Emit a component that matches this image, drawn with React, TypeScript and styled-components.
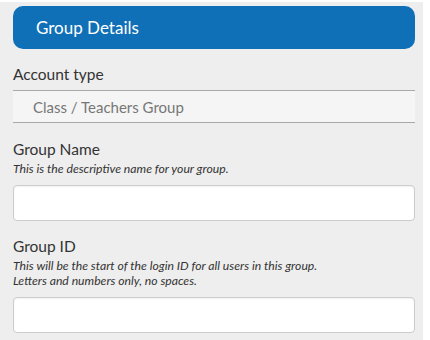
import styled, { createGlobalStyle } from 'styled-components';

const GlobalStyle = createGlobalStyle`
  html, body {
    margin: 0;
    padding: 0;
    background: #ffffff;
  }
  body {
    font-family: Lato, "Open Sans", sans-serif;
  }
`;

const Page = styled.div`
  width: 423px;
  height: 338px;
  margin-top: 2px;
  padding: 4px 8px 0 13px;
  box-sizing: border-box;
  background: #eeeeee;
  display: flex;
  flex-direction: column;
  overflow: hidden;
`;

const Header = styled.div`
  height: 43px;
  display: flex;
  align-items: center;
  padding-left: 23px;
  border-radius: 10px;
  background: #0f70b8;
  color: #ffffff;
  font-size: 17px;
`;

const Field = styled.div<{ $top: number }>`
  display: flex;
  flex-direction: column;
  margin-top: ${p => p.$top}px;
`;

const Label = styled.div`
  font-size: 15.5px;
  line-height: 20px;
  color: #333333;
`;

const Hint = styled.div`
  margin-top: 2px;
  font-size: 12.2px;
  font-style: italic;
  line-height: 15px;
  color: #333333;
`;

const ReadOnly = styled.div`
  margin-top: 6px;
  height: 31px;
  display: flex;
  align-items: center;
  padding-left: 20px;
  background: #f5f5f5;
  border-top: 1px solid #a8a8a8;
  border-bottom: 1px solid #a8a8a8;
  color: #777777;
  font-size: 15px;
`;

const Input = styled.input`
  margin-top: 9px;
  height: 36px;
  box-sizing: border-box;
  border: 1px solid #cccccc;
  border-radius: 4px;
  background: #ffffff;
  box-shadow: inset 0 1px 2px rgba(0, 0, 0, 0.06);
  font: inherit;
  outline: none;
`;

export default function App() {
  return (
    <>
      <GlobalStyle />
      <Page>
        <Header>Group Details</Header>

        <Field $top={15}>
          <Label>Account type</Label>
          <ReadOnly>Class / Teachers Group</ReadOnly>
        </Field>

        <Field $top={16}>
          <Label>Group Name</Label>
          <Hint>This is the descriptive name for your group.</Hint>
          <Input type="text" />
        </Field>

        <Field $top={15}>
          <Label>Group ID</Label>
          <Hint>
            This will be the start of the login ID for all users in this group.
            <br />
            Letters and numbers only, no spaces.
          </Hint>
          <Input type="text" />
        </Field>
      </Page>
    </>
  );
}
